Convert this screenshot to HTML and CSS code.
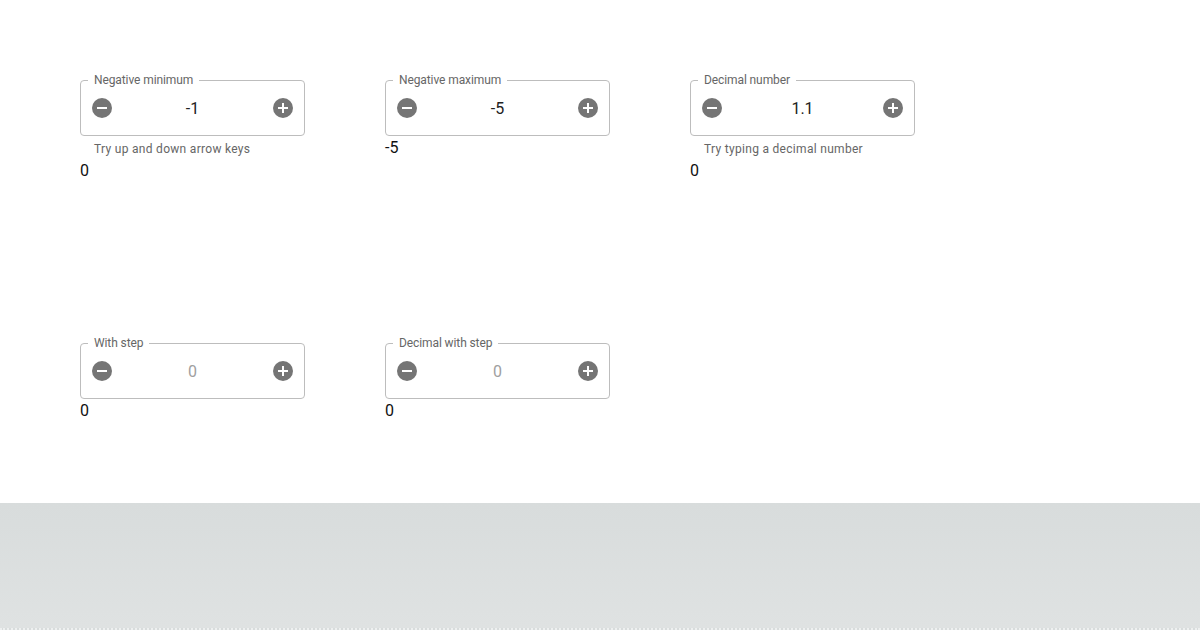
FILE: index.html
```html
<!DOCTYPE html>
<html>
<head>
<meta charset="utf-8">
<link rel="stylesheet" href="styles.css">
</head>
<body>
<main class="page">
  <div class="cell">
    <div class="field">
      <span class="label">Negative minimum</span>
      <button class="btn"><svg viewBox="0 0 20 20" width="20" height="20"><circle cx="10" cy="10" r="10" fill="#757575"/><rect x="5" y="9" width="10" height="2" fill="#fff"/></svg></button>
      <span class="value">-1</span>
      <button class="btn"><svg viewBox="0 0 20 20" width="20" height="20"><circle cx="10" cy="10" r="10" fill="#757575"/><rect x="5" y="9" width="10" height="2" fill="#fff"/><rect x="9" y="5" width="2" height="10" fill="#fff"/></svg></button>
    </div>
    <div class="helper">Try up and down arrow keys</div>
    <div class="out">0</div>
  </div>
  <div class="cell">
    <div class="field">
      <span class="label">Negative maximum</span>
      <button class="btn"><svg viewBox="0 0 20 20" width="20" height="20"><circle cx="10" cy="10" r="10" fill="#757575"/><rect x="5" y="9" width="10" height="2" fill="#fff"/></svg></button>
      <span class="value">-5</span>
      <button class="btn"><svg viewBox="0 0 20 20" width="20" height="20"><circle cx="10" cy="10" r="10" fill="#757575"/><rect x="5" y="9" width="10" height="2" fill="#fff"/><rect x="9" y="5" width="2" height="10" fill="#fff"/></svg></button>
    </div>
    <div class="out">-5</div>
  </div>
  <div class="cell">
    <div class="field">
      <span class="label">Decimal number</span>
      <button class="btn"><svg viewBox="0 0 20 20" width="20" height="20"><circle cx="10" cy="10" r="10" fill="#757575"/><rect x="5" y="9" width="10" height="2" fill="#fff"/></svg></button>
      <span class="value">1.1</span>
      <button class="btn"><svg viewBox="0 0 20 20" width="20" height="20"><circle cx="10" cy="10" r="10" fill="#757575"/><rect x="5" y="9" width="10" height="2" fill="#fff"/><rect x="9" y="5" width="2" height="10" fill="#fff"/></svg></button>
    </div>
    <div class="helper">Try typing a decimal number</div>
    <div class="out">0</div>
  </div>
  <div class="cell">
    <div class="field">
      <span class="label">With step</span>
      <button class="btn"><svg viewBox="0 0 20 20" width="20" height="20"><circle cx="10" cy="10" r="10" fill="#757575"/><rect x="5" y="9" width="10" height="2" fill="#fff"/></svg></button>
      <span class="value placeholder">0</span>
      <button class="btn"><svg viewBox="0 0 20 20" width="20" height="20"><circle cx="10" cy="10" r="10" fill="#757575"/><rect x="5" y="9" width="10" height="2" fill="#fff"/><rect x="9" y="5" width="2" height="10" fill="#fff"/></svg></button>
    </div>
    <div class="out">0</div>
  </div>
  <div class="cell">
    <div class="field">
      <span class="label">Decimal with step</span>
      <button class="btn"><svg viewBox="0 0 20 20" width="20" height="20"><circle cx="10" cy="10" r="10" fill="#757575"/><rect x="5" y="9" width="10" height="2" fill="#fff"/></svg></button>
      <span class="value placeholder">0</span>
      <button class="btn"><svg viewBox="0 0 20 20" width="20" height="20"><circle cx="10" cy="10" r="10" fill="#757575"/><rect x="5" y="9" width="10" height="2" fill="#fff"/><rect x="9" y="5" width="2" height="10" fill="#fff"/></svg></button>
    </div>
    <div class="out">0</div>
  </div>
</main>
<footer class="footer"></footer>
</body>
</html>
```
FILE: styles.css
```css
html, body {
  margin: 0;
  padding: 0;
  height: 100%;
}
body {
  font-family: Roboto, "Liberation Sans", sans-serif;
  background: #fff;
  color: #111;
  display: flex;
  flex-direction: column;
}
.page {
  box-sizing: border-box;
  height: 503px;
  padding: 80px;
  display: grid;
  grid-template-columns: repeat(3, 225px);
  grid-template-rows: 183px 80px;
  column-gap: 80px;
  row-gap: 80px;
  align-content: start;
}
.cell {
  display: flex;
  flex-direction: column;
}
.field {
  position: relative;
  box-sizing: border-box;
  height: 56px;
  border: 1px solid #bdbdbd;
  border-radius: 4px;
  padding: 0 11px;
  display: flex;
  align-items: center;
}
.label {
  position: absolute;
  top: -8px;
  left: 7px;
  padding: 0 6px;
  background: #fff;
  font-size: 12px;
  letter-spacing: -0.1px;
  line-height: 14px;
  color: #666;
}
.btn {
  border: 0;
  padding: 0;
  margin: 0;
  background: none;
  width: 20px;
  height: 20px;
  display: flex;
}
.value {
  flex: 1;
  text-align: center;
  font-size: 16px;
  color: #222;
  line-height: 20px;
  padding-top: 2px;
}
.placeholder {
  color: #a0a0a0;
}
.helper {
  margin: 6px 0 0 14px;
  font-size: 12px;
  letter-spacing: 0.3px;
  line-height: 14px;
  color: #666;
}
.out {
  font-size: 16px;
  line-height: 20px;
  color: #111;
}
.helper + .out {
  margin-top: 5px;
}
.field + .out {
  margin-top: 2px;
}
.footer {
  flex: 1;
  background: linear-gradient(#d8dcdc, #dfe2e2);
  border-bottom: 2px dotted #eef0f0;
}
```
